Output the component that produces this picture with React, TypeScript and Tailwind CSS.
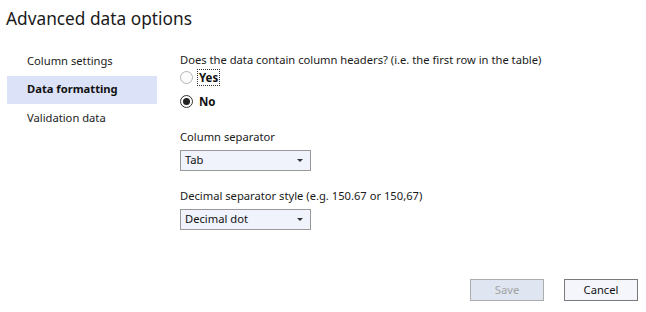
import { useState } from 'react';

const font = { fontFamily: '"Noto Sans", "Open Sans", sans-serif' };

function Radio({ label, checked, focused, onSelect }: { label: string; checked: boolean; focused?: boolean; onSelect: () => void }) {
  return (
    <button type="button" onClick={onSelect} className="flex h-[20px] items-center gap-[4px] text-left">
      <span
        className={`flex h-[13px] w-[13px] items-center justify-center rounded-full border ${
          checked ? 'border-[#333333] bg-white' : 'border-[#b4b4b4] bg-[#fcfcfc]'
        }`}
      >
        {checked && <span className="h-[7px] w-[7px] rounded-full bg-[#222222]" />}
      </span>
      <span
        className={`px-[1px] text-[11.5px] font-bold leading-[15px] text-[#111111] ${
          focused ? 'border border-dotted border-[#333333]' : 'border border-transparent'
        }`}
      >
        {label}
      </span>
    </button>
  );
}

function Dropdown({ value }: { value: string }) {
  return (
    <div className="flex h-[21px] w-[131px] items-center justify-between border border-[#999999] bg-[#f0f3fc] pl-[4px] pr-[7px] text-[11.2px] text-[#111111]">
      <span>{value}</span>
      <svg width="6" height="3" viewBox="0 0 6 3">
        <path d="M0 0h6L3 3z" fill="#333333" />
      </svg>
    </div>
  );
}

export default function App() {
  const [headers, setHeaders] = useState<'yes' | 'no'>('no');
  const nav = ['Column settings', 'Data formatting', 'Validation data'];

  return (
    <div className="flex h-[312px] w-[646px] flex-col bg-white text-[#1a1a1a]" style={font}>
      {/* Titulo */}
      <h1 className="pl-[6px] pt-[6px] text-[17.3px] leading-[26px] text-[#1a1a1a]">Advanced data options</h1>

      <div className="mt-[15px] flex flex-1">
        {/* Menu lateral */}
        <nav className="ml-[7px] flex w-[150px] flex-col">
          {nav.map((item) => (
            <div
              key={item}
              className={`flex h-[28.5px] items-center pl-[20px] text-[11.2px] ${
                item === 'Data formatting' ? 'bg-[#dce2f7] font-bold text-[#111111]' : 'text-[#1a1a1a]'
              }`}
            >
              {item}
            </div>
          ))}
        </nav>

        {/* Conteudo */}
        <div className="ml-[23px] flex flex-col pt-[5px] text-[11.2px]">
          <p className="leading-[16px]">Does the data contain column headers? (i.e. the first row in the table)</p>
          <div className="-mt-[1px] flex flex-col gap-[4px]">
            <Radio label="Yes" checked={headers === 'yes'} focused onSelect={() => setHeaders('yes')} />
            <Radio label="No" checked={headers === 'no'} onSelect={() => setHeaders('no')} />
          </div>

          <p className="mt-[18px] leading-[16px]">Column separator</p>
          <div className="mt-[5px]">
            <Dropdown value="Tab" />
          </div>

          <p className="mt-[17px] leading-[16px]">Decimal separator style (e.g. 150.67 or 150,67)</p>
          <div className="mt-[5px]">
            <Dropdown value="Decimal dot" />
          </div>
        </div>
      </div>

      {/* Botoes */}
      <div className="flex justify-end gap-[20px] pb-[11px] pr-[8px] text-[11.2px]">
        <button type="button" disabled className="h-[22px] w-[74px] border border-[#acacac] bg-[#dfe6f1] text-[#a3a3a3]">
          Save
        </button>
        <button type="button" className="h-[22px] w-[74px] border border-[#7a7a7a] bg-[#f4f6fc] text-[#111111]">
          Cancel
        </button>
      </div>
    </div>
  );
}
